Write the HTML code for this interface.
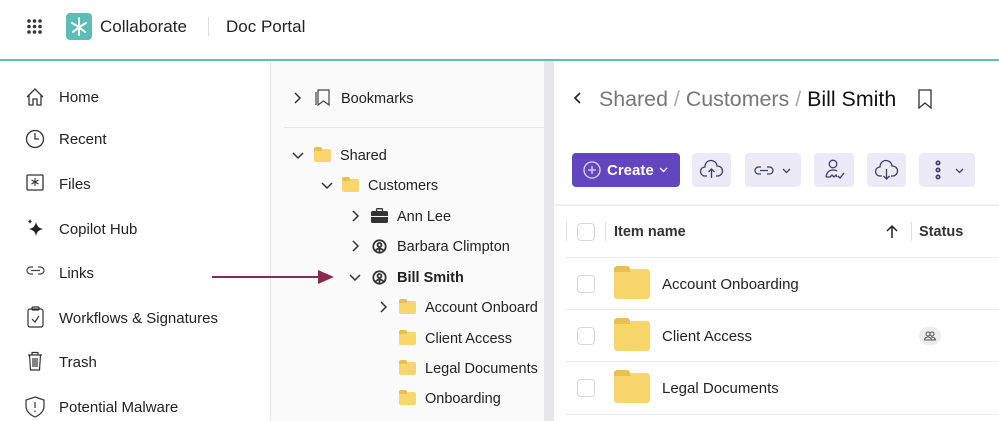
<!DOCTYPE html>
<html><head><style>
*{margin:0;padding:0;box-sizing:border-box}
body{width:999px;height:421px;overflow:hidden;background:#fff;font-family:"Liberation Sans",sans-serif;color:#222;position:relative}
.a{position:absolute}
.t{position:absolute;white-space:nowrap;margin-top:1px}
svg{position:absolute;overflow:visible}
.nav{font-size:15px;color:#222}
.tree{font-size:14.5px;color:#222}
.btn{position:absolute;top:153px;height:34px;background:#edeaf7;border-radius:4px}
.row{position:absolute;left:565px;right:0;height:1px;background:#ececec}
.cb{position:absolute;width:18px;height:18px;border:1.5px solid #d6d6d6;border-radius:4px;background:#fff}
.fold{position:absolute;width:36px;height:30px;background:#f8d66b;border-radius:3px}
.fold:before{content:"";position:absolute;left:0;top:-3px;width:16px;height:6px;background:#e9c04e;border-radius:3px 3px 0 0}
.sf{position:absolute;width:17px;height:13px;background:#f8d66b;border-radius:2px}
.sf:before{content:"";position:absolute;left:0;top:-2px;width:8px;height:4px;background:#e9c04e;border-radius:2px 2px 0 0}
</style></head><body>
<!-- header -->
<svg style="left:27px;top:19px" width="16" height="16"><g fill="#333"><circle cx="2" cy="2" r="1.8"/><circle cx="7.5" cy="2" r="1.8"/><circle cx="13" cy="2" r="1.8"/><circle cx="2" cy="7.5" r="1.8"/><circle cx="7.5" cy="7.5" r="1.8"/><circle cx="13" cy="7.5" r="1.8"/><circle cx="2" cy="13" r="1.8"/><circle cx="7.5" cy="13" r="1.8"/><circle cx="13" cy="13" r="1.8"/></g></svg>
<div class="a" style="left:66px;top:13px;width:26px;height:27px;background:#5bbdb4;border-radius:4px"></div>
<svg style="left:66px;top:13px" width="26" height="27"><g stroke="#fff" stroke-width="2" stroke-linecap="round"><line x1="13" y1="5" x2="13" y2="22"/><line x1="6" y1="10" x2="12" y2="13.5"/><line x1="20" y1="10" x2="14" y2="13.5"/><line x1="7" y1="19" x2="12" y2="15"/><line x1="19" y1="19" x2="14" y2="15"/></g></svg>
<div class="t" style="left:100px;top:16px;font-size:17px;color:#222">Collaborate</div>
<div class="a" style="left:208px;top:17px;width:1px;height:19px;background:#ddd"></div>
<div class="t" style="left:226px;top:16px;font-size:17px;color:#222">Doc Portal</div>
<div class="a" style="left:0;top:59px;width:999px;height:2px;background:#5bbdb4"></div>
<!-- left nav -->
<div class="a" style="left:270px;top:61px;width:1px;height:360px;background:#e6e6e6"></div>
<svg style="left:25px;top:87px" width="20" height="20" fill="none" stroke="#333" stroke-width="1.3"><path d="M2 10L10 2L18 10M4 8V18H8V12H12V18H16V8"/></svg>
<div class="t nav" style="left:59px;top:88px">Home</div>
<svg style="left:25px;top:129px" width="20" height="20" fill="none" stroke="#333" stroke-width="1.3"><circle cx="10" cy="10" r="8.5"/><path d="M10 4V10H14"/></svg>
<div class="t nav" style="left:59px;top:130px">Recent</div>
<svg style="left:26px;top:174px" width="18" height="18" fill="none" stroke="#333" stroke-width="1.3"><rect x="1" y="1" width="16" height="15" rx="1"/><path d="M9 4V12M5.5 6L12.5 10M12.5 6L5.5 10" stroke-width="1.1"/></svg>
<div class="t nav" style="left:59px;top:175px">Files</div>
<svg style="left:26px;top:218px" width="20" height="20" fill="#222"><path d="M10 4Q11 10 17 11Q11 12 10 18Q9 12 3 11Q9 10 10 4Z"/><path d="M4 1Q4.5 3 6 3.5Q4.5 4 4 6Q3.5 4 2 3.5Q3.5 3 4 1Z"/></svg>
<div class="t nav" style="left:59px;top:220px">Copilot Hub</div>
<svg style="left:26px;top:266px" width="19" height="10" fill="none" stroke="#444" stroke-width="1.2"><path d="M7 1H4.5A3.5 3.5 0 0 0 4.5 8H7M12 1H14.5A3.5 3.5 0 0 1 14.5 8H12M5 4.5H14"/></svg>
<div class="t nav" style="left:59px;top:264px">Links</div>
<svg style="left:27px;top:306px" width="17" height="22" fill="none" stroke="#333" stroke-width="1.2"><rect x="1" y="3" width="15" height="18" rx="2"/><rect x="5" y="1" width="7" height="3" rx="1"/><path d="M5 13L8 16L12 10"/></svg>
<div class="t nav" style="left:59px;top:309px">Workflows &amp; Signatures</div>
<svg style="left:27px;top:351px" width="16" height="20" fill="none" stroke="#333" stroke-width="1.2"><path d="M1 4H15M5 4V1.5H11V4M2.5 4L3.5 19H12.5L13.5 4M6 7V16M8 7V16M10 7V16"/></svg>
<div class="t nav" style="left:59px;top:353px">Trash</div>
<svg style="left:25px;top:396px" width="20" height="22" fill="none" stroke="#333" stroke-width="1.2"><path d="M10 1L19 4V10Q19 17 10 21Q1 17 1 10V4Z"/><path d="M10 6V12M10 14.5V16"/></svg>
<div class="t nav" style="left:59px;top:398px">Potential Malware</div>
<!-- tree panel -->
<div class="a" style="left:271px;top:61px;width:273px;height:360px;background:#fafafa"></div>
<div class="a" style="left:544px;top:61px;width:10px;height:360px;background:#e5e5ea"></div>
<!-- arrow -->
<div class="a" style="left:212px;top:276px;width:112px;height:2px;background:#8a2a4f"></div>
<svg style="left:318px;top:270px" width="16" height="14"><path d="M0 0L16 7L0 14Z" fill="#8a2a4f"/></svg>
<svg style="left:294px;top:92px" width="8" height="12" fill="none" stroke="#333" stroke-width="1.5"><path d="M1 1L6 6L1 11"/></svg>
<svg style="left:315px;top:89px" width="16" height="18" fill="none" stroke="#444" stroke-width="1.2"><path d="M3 1H14V16L8.5 12L3 16Z"/><path d="M1 3V16"/></svg>
<div class="t tree" style="left:341px;top:90px">Bookmarks</div>
<div class="a" style="left:284px;top:127px;width:260px;height:1px;background:#e6e6e6"></div>
<svg style="left:292px;top:152px" width="12" height="8" fill="none" stroke="#333" stroke-width="1.5"><path d="M1 1L6 6L11 1"/></svg>
<div class="sf" style="left:314px;top:149px"></div>
<div class="t tree" style="left:340px;top:147px">Shared</div>
<svg style="left:321px;top:182px" width="12" height="8" fill="none" stroke="#333" stroke-width="1.5"><path d="M1 1L6 6L11 1"/></svg>
<div class="sf" style="left:342px;top:179px"></div>
<div class="t tree" style="left:368px;top:177px">Customers</div>
<svg style="left:352px;top:210px" width="8" height="12" fill="none" stroke="#333" stroke-width="1.5"><path d="M1 1L6 6L1 11"/></svg>
<svg style="left:371px;top:208px" width="17" height="15"><rect x="5.5" y="0.7" width="6" height="3" rx="1" fill="none" stroke="#333" stroke-width="1.3"/><rect x="0" y="3" width="17" height="12" rx="1.5" fill="#333"/><rect x="0" y="8" width="17" height="1" fill="#fafafa"/></svg>
<div class="t tree" style="left:397px;top:208px">Ann Lee</div>
<svg style="left:352px;top:240px" width="8" height="12" fill="none" stroke="#333" stroke-width="1.5"><path d="M1 1L6 6L1 11"/></svg>
<svg style="left:372px;top:239px" width="15" height="15" fill="none" stroke="#333" stroke-width="1.8"><circle cx="7.5" cy="7.5" r="6.2"/><circle cx="7.5" cy="6" r="2"/><path d="M3 12Q7.5 7 12 12M7.5 8V14"/></svg>
<div class="t tree" style="left:397px;top:238px">Barbara Climpton</div>
<svg style="left:349px;top:274px" width="12" height="8" fill="none" stroke="#333" stroke-width="1.5"><path d="M1 1L6 6L11 1"/></svg>
<svg style="left:372px;top:270px" width="15" height="15" fill="none" stroke="#333" stroke-width="1.8"><circle cx="7.5" cy="7.5" r="6.2"/><circle cx="7.5" cy="6" r="2"/><path d="M3 12Q7.5 7 12 12M7.5 8V14"/></svg>
<div class="t tree" style="left:397px;top:269px;font-weight:bold">Bill Smith</div>
<svg style="left:380px;top:301px" width="8" height="12" fill="none" stroke="#333" stroke-width="1.5"><path d="M1 1L6 6L1 11"/></svg>
<div class="sf" style="left:399px;top:301px"></div>
<div class="t tree" style="left:425px;top:299px">Account Onboard</div>
<div class="sf" style="left:399px;top:332px"></div>
<div class="t tree" style="left:425px;top:330px">Client Access</div>
<div class="sf" style="left:399px;top:362px"></div>
<div class="t tree" style="left:425px;top:360px">Legal Documents</div>
<div class="sf" style="left:399px;top:392px"></div>
<div class="t tree" style="left:425px;top:390px">Onboarding</div>
<!-- main -->
<svg style="left:574px;top:92px" width="8" height="12" fill="none" stroke="#222" stroke-width="1.6"><path d="M6 1L1 6L6 11"/></svg>
<div class="t" style="left:599px;top:86px;font-size:21.4px;color:#777">Shared <span style="color:#aaa">/</span> Customers <span style="color:#aaa">/</span> <span style="color:#111">Bill Smith</span></div>
<svg style="left:918px;top:89px" width="14" height="20" fill="none" stroke="#333" stroke-width="1.3"><path d="M1 1H13V19L7 14L1 19Z"/></svg>
<div class="a" style="left:572px;top:153px;width:108px;height:34px;background:#6246c0;border-radius:4px"></div>
<svg style="left:583px;top:161px" width="18" height="18" fill="none" stroke="#e0dcf5" stroke-width="1.3"><circle cx="9" cy="9" r="8"/><path d="M9 5V13M5 9H13"/></svg>
<div class="t" style="left:607px;top:161px;font-size:15px;font-weight:bold;color:#fff">Create</div>
<svg style="left:659px;top:167px" width="9" height="6" fill="none" stroke="#fff" stroke-width="1.3"><path d="M1 1L4.5 4.5L8 1"/></svg>
<div class="btn" style="left:692px;width:39px"></div>
<svg style="left:700px;top:161px" width="23" height="18" fill="none" stroke="#3e3a72" stroke-width="1.3"><path d="M7 15H5A4.5 4.5 0 0 1 5 6A6 6 0 0 1 17 5A4.5 4.5 0 0 1 18 15H16M11.5 17V8M8.5 11L11.5 8L14.5 11"/></svg>
<div class="btn" style="left:745px;width:56px"></div>
<svg style="left:754px;top:166px" width="20" height="10" fill="none" stroke="#3e3a72" stroke-width="1.3"><path d="M7 1H4.5A3.5 3.5 0 0 0 4.5 8H7M13 1H15.5A3.5 3.5 0 0 1 15.5 8H13M6 4.5H14"/></svg>
<svg style="left:782px;top:168px" width="9" height="6" fill="none" stroke="#3e3a72" stroke-width="1.3"><path d="M1 1L4.5 4.5L8 1"/></svg>
<div class="btn" style="left:814px;width:40px"></div>
<svg style="left:825px;top:159px" width="20" height="22" fill="none" stroke="#3e3a72" stroke-width="1.3"><circle cx="8" cy="5" r="3.8"/><path d="M1 18Q2 11 8 11Q11 11 12 12M1 18H5L7 16L9 18L11 16L12 18M13 17L15 19L19 14"/></svg>
<div class="btn" style="left:867px;width:39px"></div>
<svg style="left:875px;top:161px" width="23" height="19" fill="none" stroke="#3e3a72" stroke-width="1.3"><path d="M7 15H5A4.5 4.5 0 0 1 5 6A6 6 0 0 1 17 5A4.5 4.5 0 0 1 18 15H16M11.5 8V18M8.5 15L11.5 18L14.5 15"/></svg>
<div class="btn" style="left:919px;width:56px"></div>
<svg style="left:934px;top:160px" width="8" height="20"><g fill="none" stroke="#3e3a72" stroke-width="1.6"><circle cx="4" cy="3" r="1.7"/><circle cx="4" cy="10" r="1.7"/><circle cx="4" cy="17" r="1.7"/></g></svg>
<svg style="left:955px;top:168px" width="9" height="6" fill="none" stroke="#3e3a72" stroke-width="1.3"><path d="M1 1L4.5 4.5L8 1"/></svg>
<div class="a" style="left:554px;top:204px;width:445px;height:2px;background:#f0f0f0"></div>
<div class="a" style="left:566px;top:222px;width:1px;height:19px;background:#e0e0e0"></div>
<div class="cb" style="left:577px;top:223px"></div>
<div class="a" style="left:605px;top:222px;width:1px;height:19px;background:#e0e0e0"></div>
<div class="t" style="left:614px;top:223px;font-size:14.5px;font-weight:bold;color:#333">Item name</div>
<svg style="left:886px;top:224px" width="12" height="15" fill="none" stroke="#222" stroke-width="1.5"><path d="M6 14V2M1 7L6 2L11 7"/></svg>
<div class="a" style="left:911px;top:222px;width:1px;height:19px;background:#e0e0e0"></div>
<div class="t" style="left:919px;top:223px;font-size:14.5px;font-weight:bold;color:#333">Status</div>
<div class="row" style="top:257px"></div>
<div class="cb" style="left:577px;top:275px"></div>
<div class="fold" style="left:614px;top:269px"></div>
<div class="t" style="left:662px;top:275px;font-size:15px">Account Onboarding</div>
<div class="row" style="top:309px"></div>
<div class="cb" style="left:577px;top:327px"></div>
<div class="fold" style="left:614px;top:321px"></div>
<div class="t" style="left:662px;top:327px;font-size:15px">Client Access</div>
<div class="a" style="left:919px;top:327px;width:22px;height:18px;border-radius:9px;background:#ececec"></div>
<svg style="left:924px;top:331px" width="12" height="10" fill="none" stroke="#555" stroke-width="1"><circle cx="4" cy="3" r="2"/><circle cx="8" cy="3" r="2"/><path d="M0.5 9Q1 6 4 6Q7 6 7.5 9ZM7 6Q11 6 11.5 9H8"/></svg>
<div class="row" style="top:361px"></div>
<div class="cb" style="left:577px;top:379px"></div>
<div class="fold" style="left:614px;top:373px"></div>
<div class="t" style="left:662px;top:379px;font-size:15px">Legal Documents</div>
<div class="row" style="top:414px"></div>
</body></html>
